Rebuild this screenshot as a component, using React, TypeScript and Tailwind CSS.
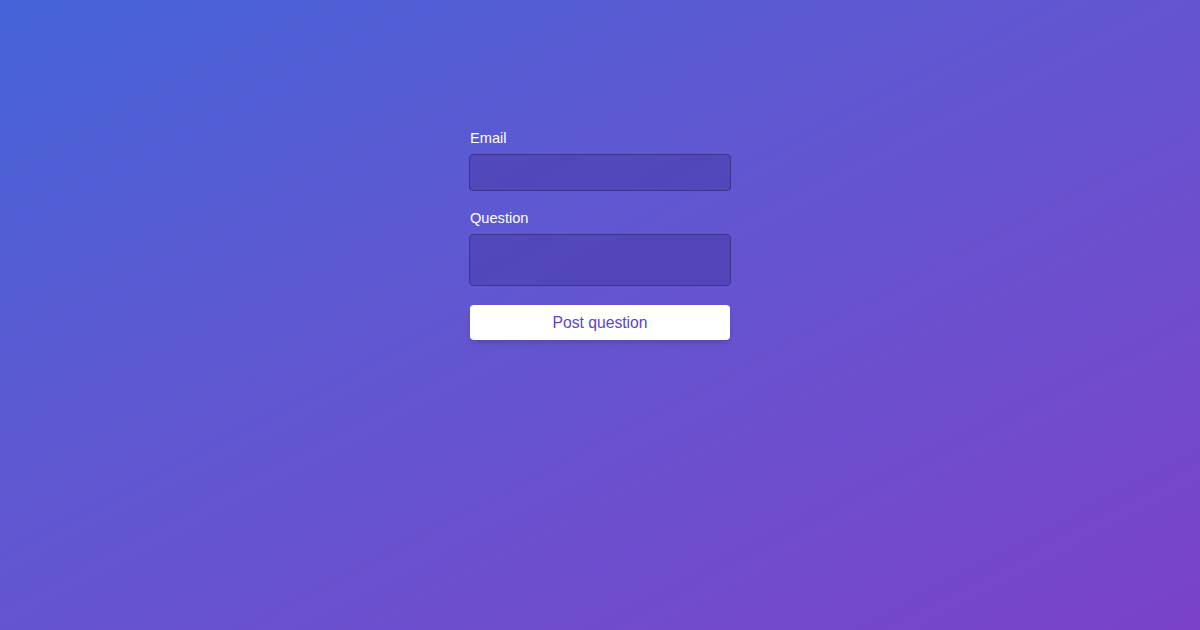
import React from 'react';

const App = () => {
  return (
    <div
      className="min-h-screen w-full bg-gradient-to-br from-[#4564d8] to-[#7a42c8] flex justify-center"
      style={{ fontFamily: '"Liberation Sans", Arial, sans-serif' }}
    >
      <form className="w-[262px] pt-[129px] flex flex-col" onSubmit={(e) => e.preventDefault()}>
        <label className="text-white text-[14.6px] leading-[18px] mb-[7px] pl-px">Email</label>
        <input
          type="email"
          className="h-[37px] w-full rounded-[4px] border border-[#3a3590] bg-[#4d40b0]/70 px-2 text-white outline-none"
        />
        <label className="text-white text-[14.6px] leading-[18px] mt-[18px] mb-[7px] pl-px">Question</label>
        <textarea
          className="h-[52px] w-full resize-none rounded-[4px] border border-[#3a3590] bg-[#4d40b0]/70 px-2 text-white outline-none"
        />
        <button
          type="submit"
          className="mt-[19px] mx-px h-[35px] rounded-[4px] bg-white text-[#5a45c9] text-[15.7px] shadow-md"
        >
          Post question
        </button>
      </form>
    </div>
  );
};

export default App;
